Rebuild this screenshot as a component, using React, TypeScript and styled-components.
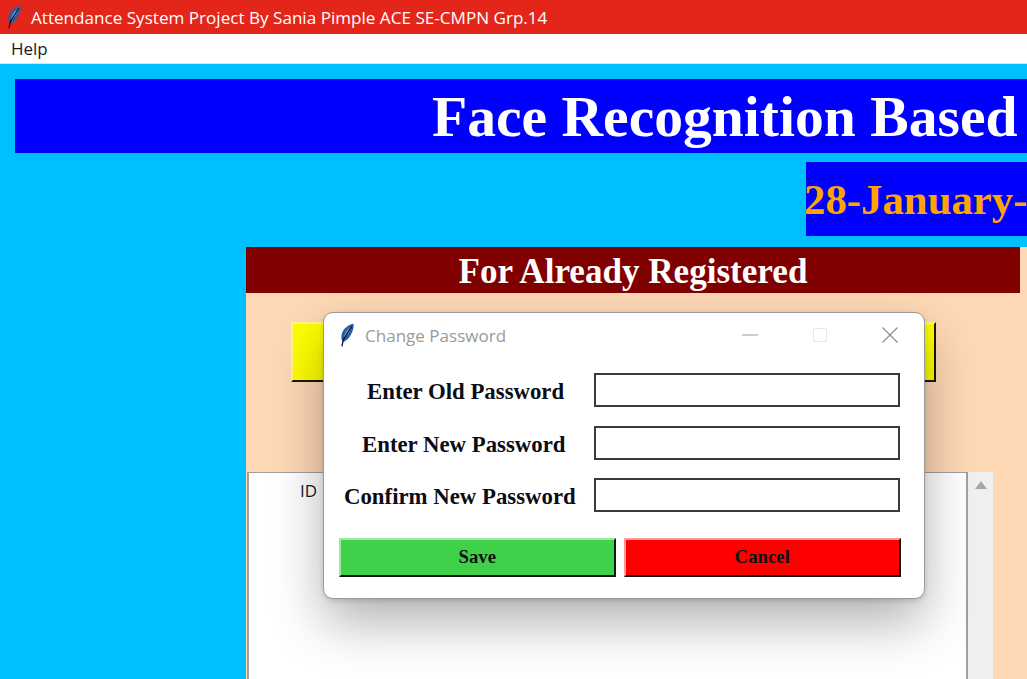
import React from "react";
import styled, { createGlobalStyle } from "styled-components";

const Global = createGlobalStyle`
  html, body { margin: 0; padding: 0; height: 100%; overflow: hidden; }
  #root { height: 100%; }
  * { box-sizing: border-box; }
`;

const Frame = styled.div`
  position: relative;
  width: 1027px;
  height: 679px;
  overflow: hidden;
  display: flex;
  flex-direction: column;
  background: #00bfff;
  font-family: "Open Sans", "Noto Sans", sans-serif;
`;

const TitleBar = styled.header`
  flex: none;
  height: 34px;
  background: #e4261a;
  display: flex;
  align-items: center;
  padding-left: 6px;
  gap: 10px;
  color: #fff;
  font-size: 17.1px;
  white-space: nowrap;
`;

const MenuBar = styled.nav`
  flex: none;
  height: 30px;
  background: #fff;
  border-bottom: 1px solid #d9e4e8;
  display: flex;
  align-items: center;
  padding-left: 11px;
  color: #1a1a1a;
  font-size: 17px;
`;

const Page = styled.main`
  flex: 1;
  min-height: 0;
  display: flex;
  flex-direction: column;
  padding-top: 15px;
  overflow: hidden;
`;

const Banner = styled.div`
  flex: none;
  height: 74px;
  margin-left: 15px;
  background: #0000ff;
  color: #fff;
  font: bold 57.6px/76px "Liberation Serif", serif;
  white-space: nowrap;
  overflow: hidden;
  padding-left: 417px;
`;

const DateBox = styled.div`
  flex: none;
  height: 74px;
  margin: 9px 0 11px 806px;
  background: #0000ff;
  color: #ffa500;
  font: bold 42.8px/76px "Liberation Serif", serif;
  white-space: nowrap;
  text-indent: -2px;
`;

const Panel = styled.section`
  flex: 1;
  min-height: 0;
  margin-left: 246px;
  background: #ffd8b5;
  display: flex;
  flex-direction: column;
`;

const PanelHeader = styled.h2`
  flex: none;
  margin: 0 7px 0 0;
  height: 46px;
  background: #800000;
  color: #fff;
  text-align: center;
  font: bold 35.1px/49px "Liberation Serif", serif;
`;

const YellowButton = styled.button`
  flex: none;
  display: block;
  width: 645px;
  height: 60px;
  margin: 29px 0 0 45px;
  padding: 0;
  background: #ffff00;
  border: 2px solid;
  border-color: #fbfb80 #1a1a00 #1a1a00 #fbfb80;
`;

const TableRow = styled.div`
  flex: 1;
  min-height: 0;
  margin-top: 90px;
  display: flex;
`;

const Table = styled.div`
  width: 721px;
  margin-left: 1px;
  background: #fff;
  border: 2px solid #a0a0a0;
  border-width: 1px 2px 0 2px;
  padding: 8px 0 0 51px;
  color: #1a1a2a;
  font-size: 17px;
  line-height: 20px;
`;

const ScrollBar = styled.div`
  width: 25px;
  background: #f0f0f0;
  display: flex;
  justify-content: center;
  padding-top: 8px;
`;

const Dialog = styled.div`
  position: absolute;
  left: 323px;
  top: 312px;
  width: 602px;
  height: 287px;
  border-radius: 10px;
  background: #fff;
  border: 1px solid #9a9a9a;
  box-shadow: 0 24px 52px rgba(0, 0, 0, 0.3), 0 2px 5px rgba(0, 0, 0, 0.15);
  display: flex;
  flex-direction: column;
  padding: 0 23px 0 15px;
`;

const DialogTitleBar = styled.div`
  flex: none;
  height: 44px;
  display: flex;
  align-items: center;
  color: #9a9a9a;
  font-size: 17.05px;
  gap: 11px;
  white-space: nowrap;
`;

const DialogTitle = styled.span`
  flex: 1;
`;

const WindowControls = styled.div`
  display: flex;
  align-items: center;
  gap: 54px;
  margin-right: 3px;
`;

const Form = styled.div`
  margin-top: 16px;
  display: grid;
  grid-template-columns: 232px 306px;
  column-gap: 18px;
  row-gap: 18.5px;
  align-items: center;
  margin-left: 5px;
`;

const FieldLabel = styled.label<{ $indent: number }>`
  padding: 4px 0 0 ${(p) => p.$indent}px;
  color: #0c0c14;
  font: bold 22.8px/30px "Liberation Serif", serif;
  white-space: nowrap;
`;

const Field = styled.input`
  height: 34px;
  width: 306px;
  background: #fff;
  border: 2px solid #3a3a3a;
  outline: none;
`;

const Actions = styled.div`
  margin-top: 26px;
  display: flex;
  gap: 8px;
`;

const ActionButton = styled.button<{ $bg: string; $light: string; $wide: number }>`
  width: ${(p) => p.$wide}px;
  height: 39px;
  padding: 0 0 2px;
  background: ${(p) => p.$bg};
  border: 2px solid;
  border-color: ${(p) => p.$light} #141414 #141414 ${(p) => p.$light};
  color: #111;
  font: bold 18.8px/31px "Liberation Serif", serif;
`;

const Feather = () => (
  <svg width="15" height="24" viewBox="0 0 15 24" fill="none">
    <path d="M14.4 .8C10 1 4.4 5.6 2.8 10.8 1.8 14.5 2.4 17.4 4.2 19 8.6 17.6 12.4 12.2 13.9 7 14.7 4.5 14.9 2.4 14.4.8Z" fill="#2a5ca6" />
    <path d="M12.9 2.6C9.8 5 6 9.4 4.8 15 8.2 12.8 11.2 8.6 12.9 2.6Z" fill="#9cc2ea" />
    <path d="M12.4 3.6 4.4 16.6 3 22.8" stroke="#0e1624" strokeWidth="1.3" strokeLinecap="round" />
  </svg>
);

const MinimizeIcon = () => (
  <svg width="16" height="16" viewBox="0 0 16 16"><path d="M0 8h16" stroke="#9a9a9a" strokeWidth="1" /></svg>
);
const MaximizeIcon = () => (
  <svg width="16" height="16" viewBox="0 0 16 16"><rect x="1.5" y="1.5" width="13" height="13" rx="1.5" fill="none" stroke="#e6e6e6" strokeWidth="1" /></svg>
);
const CloseIcon = () => (
  <svg width="16" height="16" viewBox="0 0 16 16"><path d="M.5.5l15 15M15.5.5l-15 15" stroke="#8a8a8a" strokeWidth="1.1" /></svg>
);
const ArrowUp = () => (
  <svg width="14" height="10" viewBox="0 0 14 10"><path d="M7 1l6 8H1z" fill="#a6a6a6" /></svg>
);

export default function App() {
  return (
    <Frame>
      <Global />
      <TitleBar>
        <Feather />
        <span>Attendance System Project By Sania Pimple ACE SE-CMPN Grp.14</span>
      </TitleBar>
      <MenuBar>Help</MenuBar>
      <Page>
        <Banner>Face Recognition Based</Banner>
        <DateBox>28-January-</DateBox>
        <Panel>
          <PanelHeader>For Already Registered</PanelHeader>
          <YellowButton aria-label="Take Attendance" />
          <TableRow>
            <Table>ID</Table>
            <ScrollBar><ArrowUp /></ScrollBar>
          </TableRow>
        </Panel>
      </Page>
      <Dialog>
        <DialogTitleBar>
          <Feather />
          <DialogTitle>Change Password</DialogTitle>
          <WindowControls>
            <MinimizeIcon />
            <MaximizeIcon />
            <CloseIcon />
          </WindowControls>
        </DialogTitleBar>
        <Form>
          <FieldLabel $indent={23}>Enter Old Password</FieldLabel>
          <Field />
          <FieldLabel $indent={18}>Enter New Password</FieldLabel>
          <Field />
          <FieldLabel $indent={0}>Confirm New Password</FieldLabel>
          <Field />
        </Form>
        <Actions>
          <ActionButton $bg="#3fd14a" $light="#9aeba0" $wide={277}>Save</ActionButton>
          <ActionButton $bg="#ff0000" $light="#ff9a9a" $wide={278}>Cancel</ActionButton>
        </Actions>
      </Dialog>
    </Frame>
  );
}
